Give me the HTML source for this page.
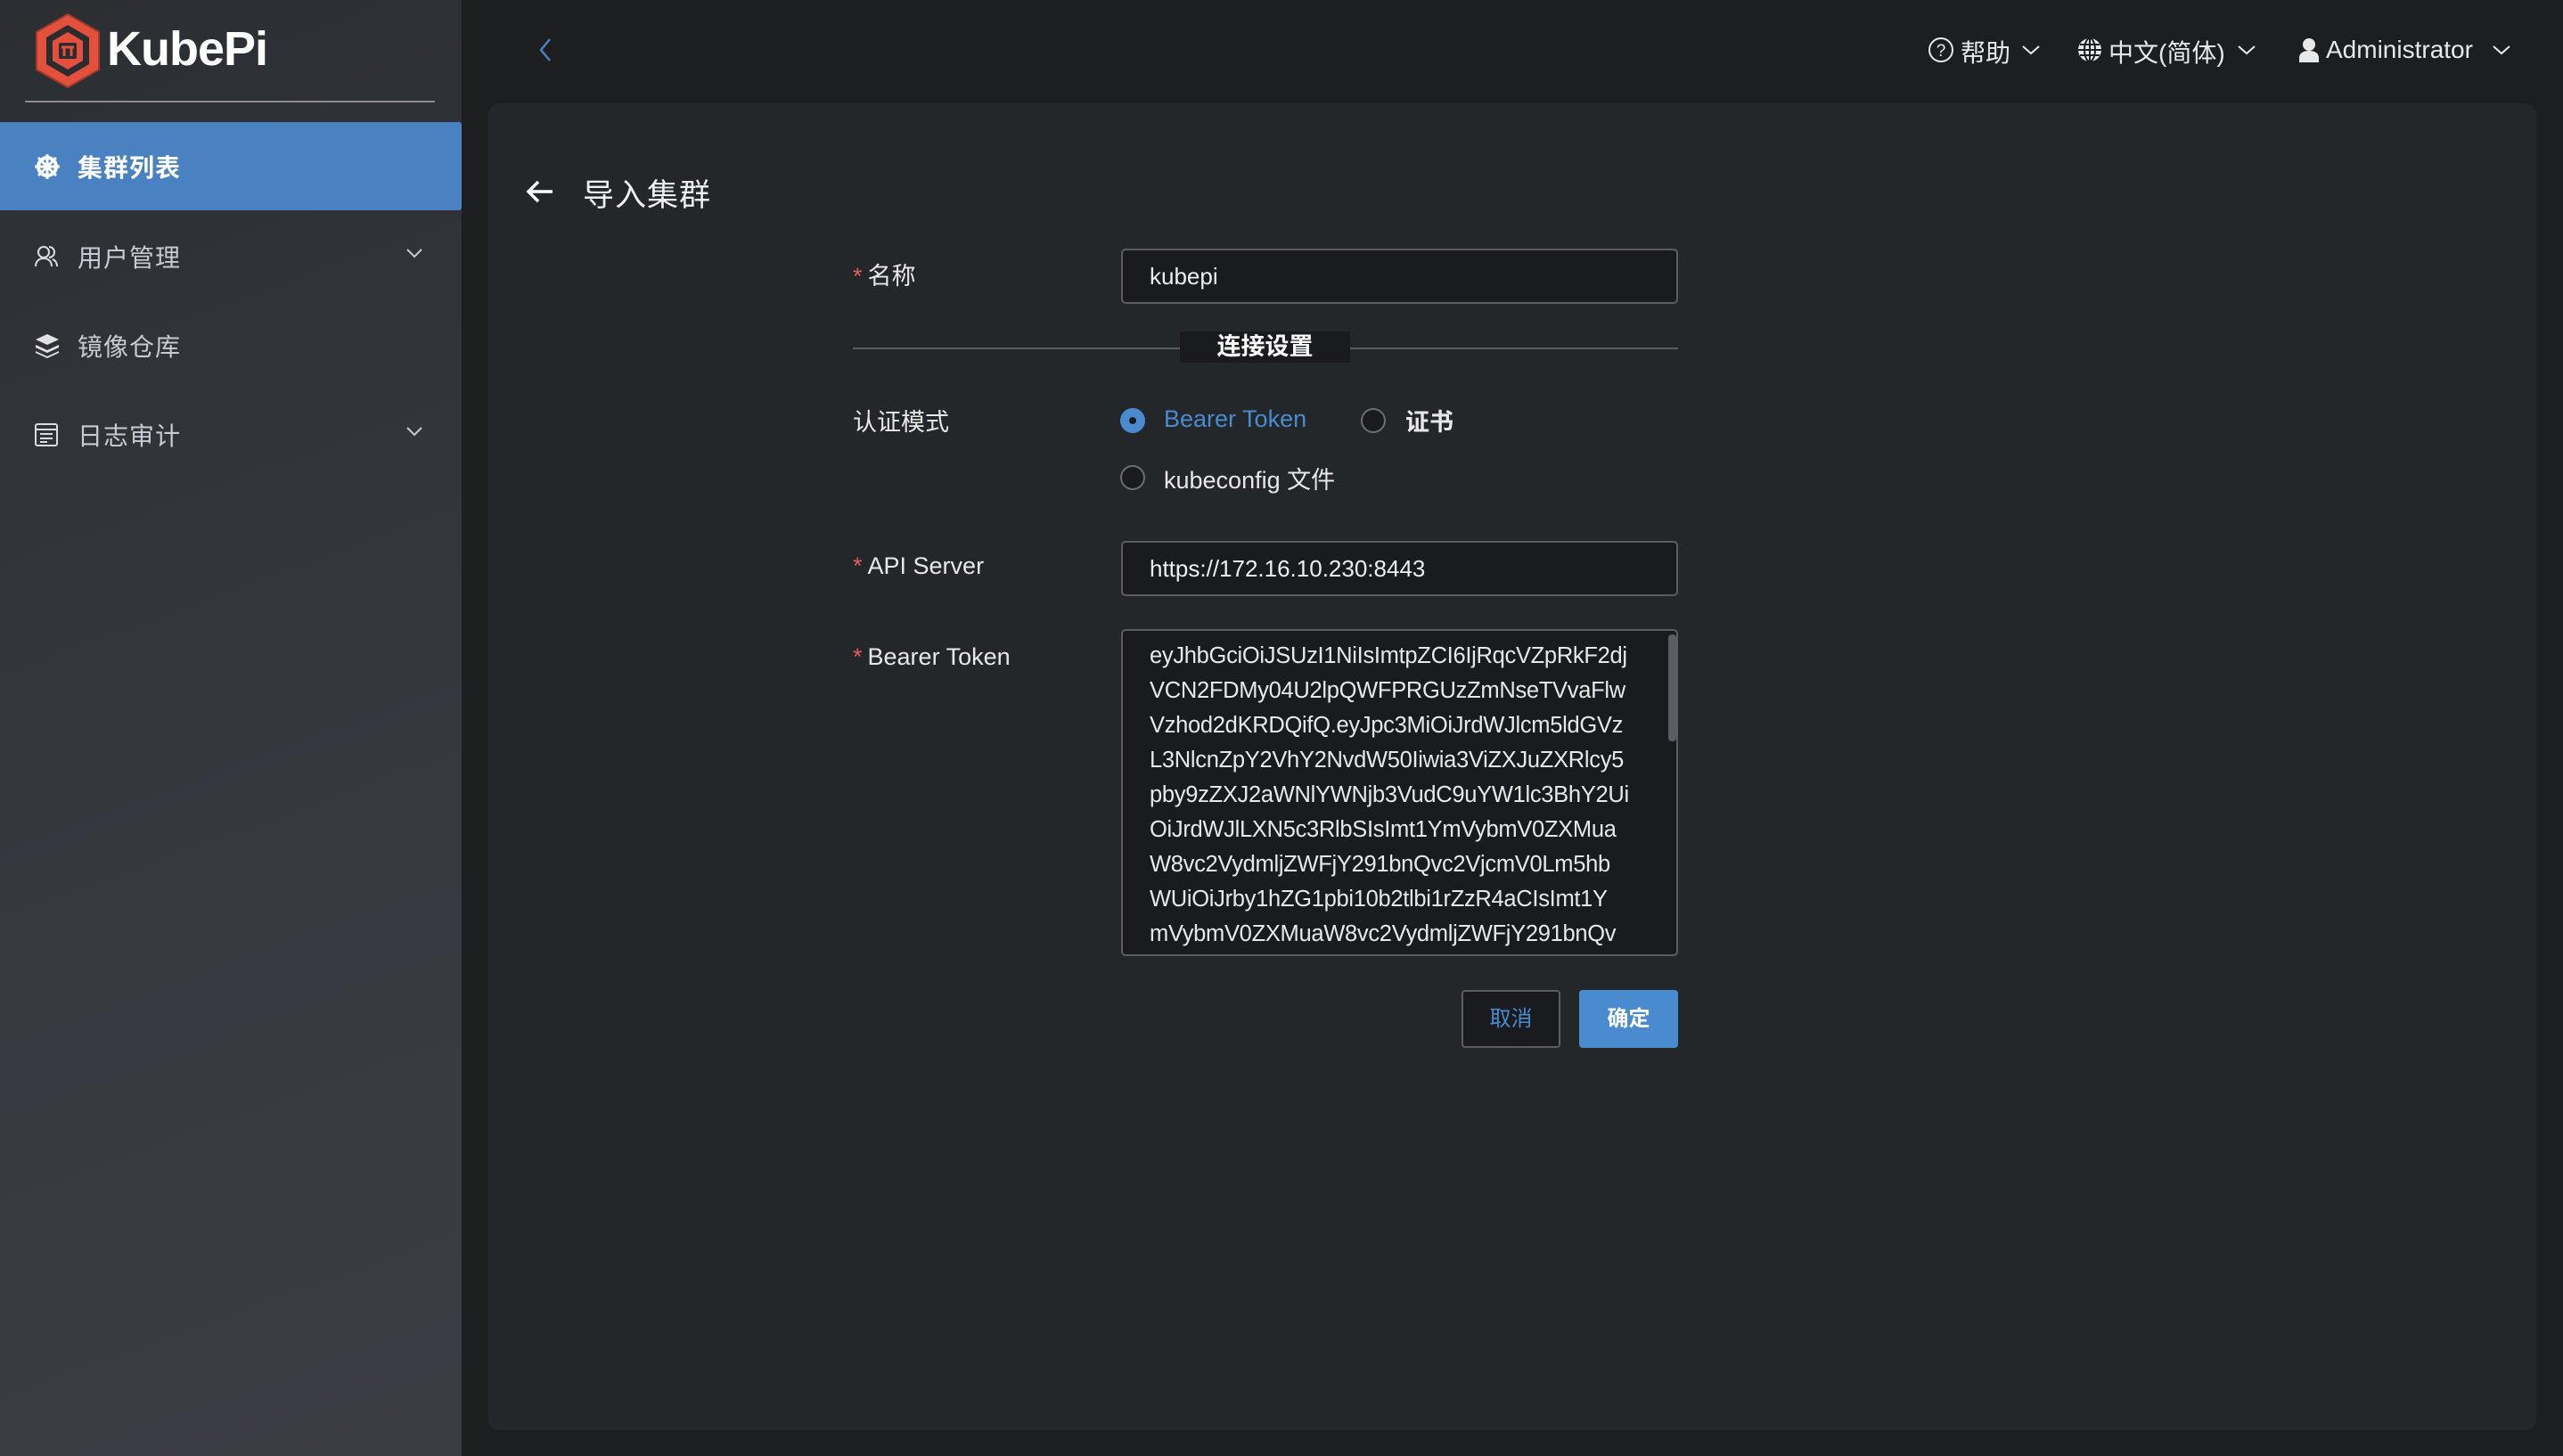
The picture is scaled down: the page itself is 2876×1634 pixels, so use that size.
<!DOCTYPE html>
<html><head><meta charset="utf-8"><style>
*{margin:0;padding:0;box-sizing:border-box}
body{width:2876px;height:1634px;background:#1d1e20;font-family:"Liberation Sans","Noto Sans CJK SC",sans-serif;color:#e6e6e6;position:relative;overflow:hidden}
.abs{position:absolute}
#side{left:0;top:0;width:518px;height:1634px;background:linear-gradient(160deg,#2b2e32,#363a3f 60%,#3a3d42)}
.item{position:absolute;left:0;width:518px;height:100px;display:flex;align-items:center;font-size:28px;color:#c8ccd2}
.item .t{position:absolute;left:87px;letter-spacing:1px}
.item svg.i{position:absolute;left:38px}
.item .chev{position:absolute;left:455px}
#panel{left:548px;top:116px;width:2298px;height:1489px;background:#23272a;border-radius:12px}
.lbl{position:absolute;font-size:27px;color:#e8e8e8;white-space:nowrap}
.star{color:#e05d5d;margin-right:6px}
.inp{position:absolute;left:1258px;width:625px;background:#1a1b1e;border:2px solid #5a5d62;border-radius:5px;font-size:26px;color:#eee;padding-left:30px;display:flex;align-items:center}
.radio{position:absolute;width:28px;height:28px;border-radius:50%;border:2px solid #6b6e73;background:#1a1b1e}
.ta{position:absolute;left:1258px;top:706px;width:625px;height:367px;background:#1a1b1e;border:2px solid #5a5d62;border-radius:5px;overflow:hidden}
.ta div{position:absolute;left:30px;font-size:25.5px;color:#e8e8e8;white-space:nowrap;letter-spacing:-0.3px}
.top{font-size:28px;color:#e8e8e8;white-space:nowrap}
</style></head><body>
<div id="side" class="abs">
  <svg class="abs" style="left:38px;top:14px" width="76" height="86" viewBox="0 0 76 86">
    <polygon points="38,2 73,22 73,64 38,84 3,64 3,22" fill="#e3503c" stroke="#a33a2d" stroke-width="2"/>
    <polygon points="38,14 62,28 62,58 38,72 14,58 14,28" fill="#2a2c30"/>
    <polygon points="38,22 55,32 55,54 38,64 21,54 21,32" fill="#e3503c"/>
    <rect x="28" y="34" width="20" height="18" rx="2" fill="#2a2c30"/>
    <path d="M31 39h14M34 39v10M42 39v10" stroke="#e3503c" stroke-width="3"/>
  </svg>
  <div class="abs" style="left:120px;top:24px;font-size:54px;font-weight:bold;color:#fff;letter-spacing:-1px">KubePi</div>
  <div class="abs" style="left:28px;top:113px;width:460px;height:2px;background:#8a8c90"></div>
  <div class="item" style="top:137px;height:99px;background:#4a81c0;border-radius:0 3px 3px 0;color:#fff;font-weight:bold">
    <svg class="i" width="30" height="30" viewBox="0 0 30 30"><circle cx="15" cy="15" r="10" fill="none" stroke="#fff" stroke-width="4"/><path d="M15 1v28M1 15h28M5 5l20 20M25 5L5 25" stroke="#fff" stroke-width="3"/><circle cx="15" cy="15" r="4" fill="#fff"/></svg>
    <span class="t">集群列表</span></div>
  <div class="item" style="top:238px">
    <svg class="i" width="28" height="28" viewBox="0 0 28 28" fill="none" stroke="#d8dbe0" stroke-width="2"><circle cx="11" cy="9" r="6"/><path d="M2 25c0-6 4-9 9-9s9 3 9 9"/><path d="M17 3a6 6 0 0 1 0 12M21 17c3 1 5 4 5 8"/></svg>
    <span class="t">用户管理</span>
    <svg class="chev" style="margin-top:-8px" width="20" height="12" viewBox="0 0 20 12"><path d="M2 2l8 8 8-8" fill="none" stroke="#c8ccd2" stroke-width="2"/></svg></div>
  <div class="item" style="top:338px">
    <svg class="i" width="30" height="28" viewBox="0 0 30 28" fill="#e0e2e6"><path d="M15 1l13 6-13 6L2 7z"/><path d="M2 13l13 6 13-6v3l-13 6-13-6z"/><path d="M2 20l13 6 13-6v2l-13 6-13-6z"/></svg>
    <span class="t">镜像仓库</span></div>
  <div class="item" style="top:438px">
    <svg class="i" width="28" height="28" viewBox="0 0 28 28" fill="none" stroke="#d8dbe0" stroke-width="2"><rect x="2" y="2" width="24" height="24" rx="2"/><path d="M2 8h24M7 13h14M7 18h14M7 22h8"/></svg>
    <span class="t">日志审计</span>
    <svg class="chev" style="margin-top:-8px" width="20" height="12" viewBox="0 0 20 12"><path d="M2 2l8 8 8-8" fill="none" stroke="#c8ccd2" stroke-width="2"/></svg></div>
</div>

<svg class="abs" style="left:604px;top:42px" width="16" height="28" viewBox="0 0 16 28"><path d="M13 2L3 14l10 12" fill="none" stroke="#4a81c0" stroke-width="2.5"/></svg>

<svg class="abs" style="left:2163px;top:41px" width="30" height="30" viewBox="0 0 30 30"><circle cx="15" cy="15" r="13" fill="none" stroke="#e8e8e8" stroke-width="2"/><text x="15" y="22" font-size="19" text-anchor="middle" fill="#e8e8e8" font-family="Liberation Sans">?</text></svg>
<div class="abs top" style="left:2200px;top:38px">帮助</div>
<svg class="abs" style="left:2268px;top:50px" width="22" height="12" viewBox="0 0 22 12"><path d="M2 2l9 8 9-8" fill="none" stroke="#e8e8e8" stroke-width="2"/></svg>
<svg class="abs" style="left:2331px;top:42px" width="28" height="28" viewBox="0 0 28 28"><circle cx="14" cy="14" r="13" fill="#e8e8e8"/><path d="M1 14h26M14 1v26M3 8h22M3 20h22" stroke="#1d1e20" stroke-width="2"/><ellipse cx="14" cy="14" rx="6" ry="13" fill="none" stroke="#1d1e20" stroke-width="2"/></svg>
<div class="abs top" style="left:2366px;top:38px">中文(简体)</div>
<svg class="abs" style="left:2510px;top:50px" width="22" height="12" viewBox="0 0 22 12"><path d="M2 2l9 8 9-8" fill="none" stroke="#e8e8e8" stroke-width="2"/></svg>
<svg class="abs" style="left:2579px;top:42px" width="24" height="28" viewBox="0 0 24 28"><circle cx="12" cy="8" r="7" fill="#e8e8e8"/><path d="M1 28v-5c0-5 4-8 11-8s11 3 11 8v5z" fill="#e8e8e8"/></svg>
<div class="abs top" style="left:2610px;top:40px">Administrator</div>
<svg class="abs" style="left:2796px;top:50px" width="22" height="12" viewBox="0 0 22 12"><path d="M2 2l9 8 9-8" fill="none" stroke="#e8e8e8" stroke-width="2"/></svg>

<div id="panel" class="abs"></div>

<svg class="abs" style="left:590px;top:201px" width="32" height="28" viewBox="0 0 32 28"><path d="M30 14H4M14 3L3 14l11 11" fill="none" stroke="#fff" stroke-width="3.5"/></svg>
<div class="abs" style="left:654px;top:191px;font-size:35px;color:#f0f0f0;letter-spacing:1px">导入集群</div>

<div class="lbl" style="left:957px;top:288px"><span class="star">*</span>名称</div>
<div class="inp" style="top:279px;height:62px">kubepi</div>

<div class="abs" style="left:957px;top:390px;width:926px;height:2px;background:#5a5d62"></div>
<div class="abs" style="left:1324px;top:372px;width:191px;height:35px;background:#1a1b1e;color:#fff;font-size:27px;text-align:center;line-height:35px;font-weight:bold">连接设置</div>

<div class="lbl" style="left:957px;top:452px">认证模式</div>
<div class="radio" style="left:1257px;top:458px;background:#4a8bd0;border-color:#4a8bd0"><div style="position:absolute;left:8px;top:8px;width:8px;height:8px;border-radius:50%;background:#1a1b1e"></div></div>
<div class="lbl" style="left:1306px;top:455px;color:#4a8bd0">Bearer Token</div>
<div class="radio" style="left:1527px;top:458px"></div>
<div class="lbl" style="left:1577px;top:452px;font-weight:bold">证书</div>
<div class="radio" style="left:1257px;top:522px"></div>
<div class="lbl" style="left:1306px;top:517px">kubeconfig 文件</div>

<div class="lbl" style="left:957px;top:620px"><span class="star">*</span>API Server</div>
<div class="inp" style="top:607px;height:62px">https://172.16.10.230:8443</div>

<div class="lbl" style="left:957px;top:722px"><span class="star">*</span>Bearer Token</div>
<div class="ta">
  <div style="top:14px">eyJhbGciOiJSUzI1NiIsImtpZCI6IjRqcVZpRkF2dj</div>
  <div style="top:53px">VCN2FDMy04U2lpQWFPRGUzZmNseTVvaFlw</div>
  <div style="top:92px">Vzhod2dKRDQifQ.eyJpc3MiOiJrdWJlcm5ldGVz</div>
  <div style="top:131px">L3NlcnZpY2VhY2NvdW50Iiwia3ViZXJuZXRlcy5</div>
  <div style="top:170px">pby9zZXJ2aWNlYWNjb3VudC9uYW1lc3BhY2Ui</div>
  <div style="top:209px">OiJrdWJlLXN5c3RlbSIsImt1YmVybmV0ZXMua</div>
  <div style="top:248px">W8vc2VydmljZWFjY291bnQvc2VjcmV0Lm5hb</div>
  <div style="top:287px">WUiOiJrby1hZG1pbi10b2tlbi1rZzR4aCIsImt1Y</div>
  <div style="top:326px">mVybmV0ZXMuaW8vc2VydmljZWFjY291bnQv</div>
  <div style="left:612px;top:4px;width:9px;height:120px;background:#5a5d62;border-radius:4px"></div>
</div>

<div class="abs" style="left:1640px;top:1111px;width:111px;height:65px;border:2px solid #5a5d62;border-radius:4px;background:#1a1b1e;color:#4a8bd0;font-size:24px;text-align:center;line-height:61px">取消</div>
<div class="abs" style="left:1772px;top:1111px;width:111px;height:65px;border-radius:4px;background:#4a8bd0;color:#fff;font-size:24px;text-align:center;line-height:65px;font-weight:bold">确定</div>
</body></html>
